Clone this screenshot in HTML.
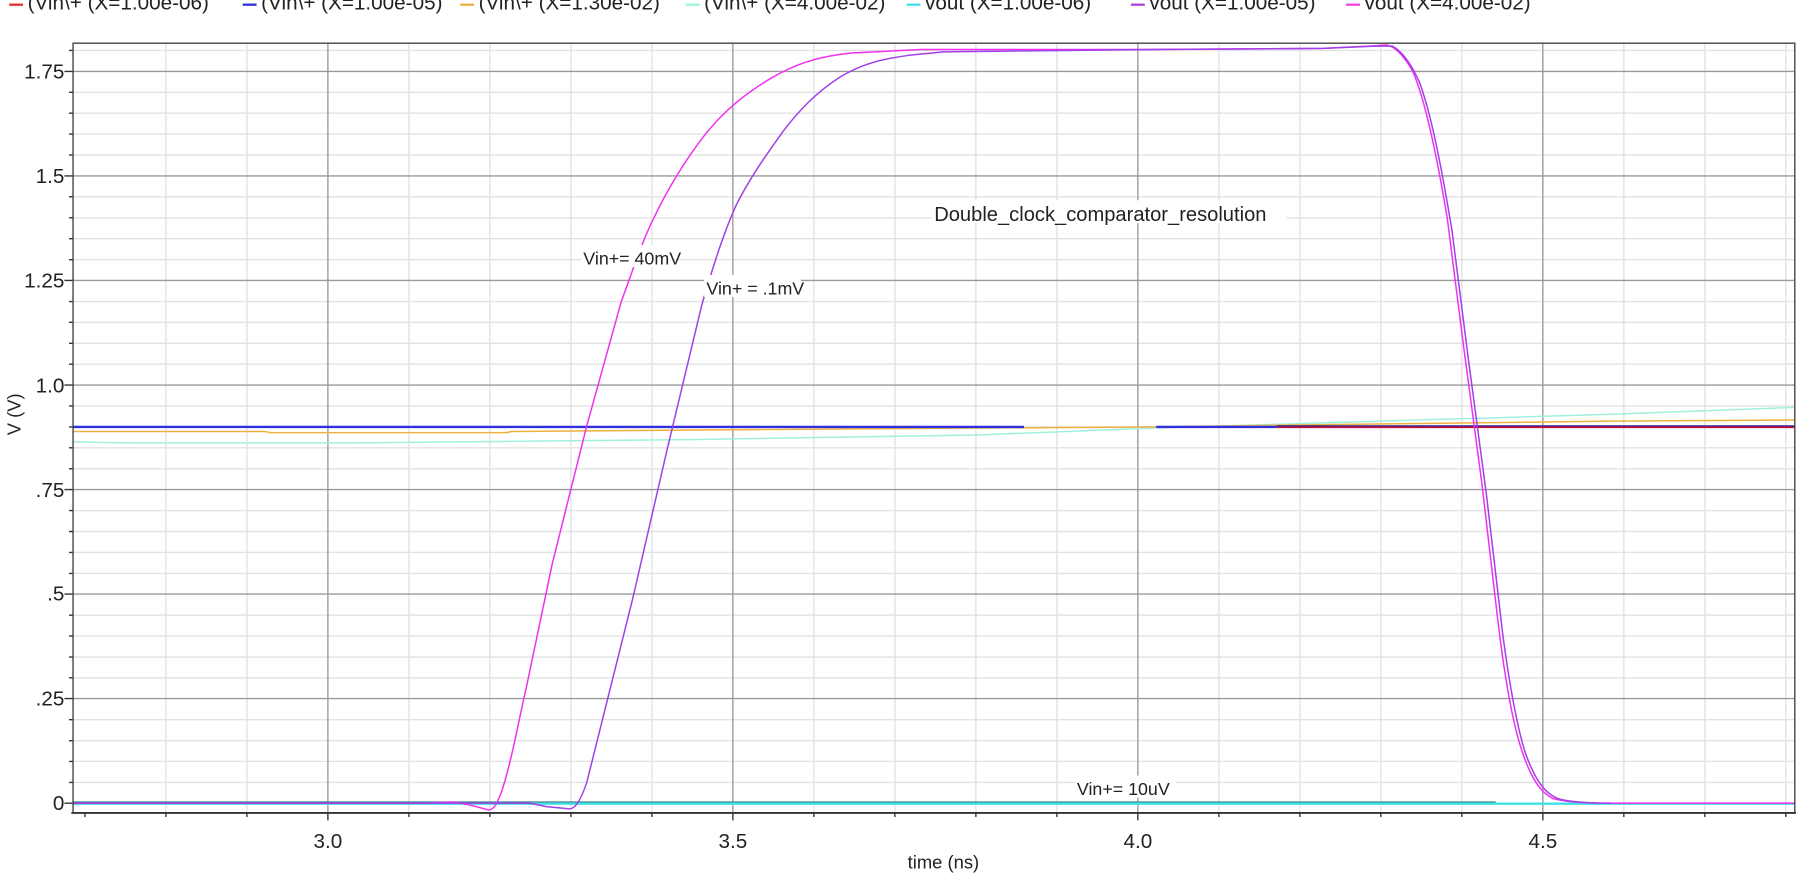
<!DOCTYPE html>
<html><head><meta charset="utf-8"><style>
html,body{margin:0;padding:0;background:#fff;overflow:hidden}
svg{display:block}
text{font-family:"Liberation Sans","DejaVu Sans",sans-serif;fill:#222}
</style></head><body>
<svg width="1804" height="878" viewBox="0 0 1568 763" xmlns="http://www.w3.org/2000/svg">
<rect width="1568" height="763" fill="#fff"/>
<g font-size="18">
<rect x="8" y="3" width="12" height="2" fill="#e03030"/><text x="24" y="8">(Vin\+ (X=1.00e-06)</text>
<rect x="211" y="3" width="12" height="2" fill="#3030e0"/><text x="227" y="8">(Vin\+ (X=1.00e-05)</text>
<rect x="400" y="3" width="12" height="2" fill="#f0b040"/><text x="416" y="8">(Vin\+ (X=1.30e-02)</text>
<rect x="596" y="3" width="12" height="2" fill="#a0f0e0"/><text x="612" y="8">(Vin\+ (X=4.00e-02)</text>
<rect x="788" y="3" width="12" height="2" fill="#40e0e8"/><text x="804" y="8">vout (X=1.00e-06)</text>
<rect x="983" y="3" width="12" height="2" fill="#b040e0"/><text x="999" y="8">vout (X=1.00e-05)</text>
<rect x="1170" y="3" width="12" height="2" fill="#f040e0"/><text x="1186" y="8">vout (X=4.00e-02)</text>
</g>
<g stroke="#e2e2e2" stroke-width="1.2">
<path d="M144.2 37V706M214.6 37V706M355.4 37V706M425.8 37V706M496.2 37V706M566.6 37V706M707.4 37V706M777.8 37V706M848.2 37V706M918.6 37V706M1059.4 37V706M1129.8 37V706M1200.2 37V706M1270.6 37V706M1411.4 37V706M1481.8 37V706M1552.2 37V706"/>
<path d="M63 43.8H1560M63 80.2H1560M63 98.3H1560M63 116.5H1560M63 134.7H1560M63 171H1560M63 189.2H1560M63 207.4H1560M63 225.6H1560M63 262H1560M63 280.1H1560M63 298.3H1560M63 316.5H1560M63 352.8H1560M63 371H1560M63 389.2H1560M63 407.4H1560M63 443.7H1560M63 461.9H1560M63 480.1H1560M63 498.3H1560M63 534.6H1560M63 552.8H1560M63 571H1560M63 589.1H1560M63 625.5H1560M63 643.7H1560M63 661.8H1560M63 680H1560"/>
</g>
<g stroke="#999" stroke-width="1.2">
<path d="M285 37V706M637 37V706M989 37V706M1341 37V706"/>
<path d="M63 62H1560M63 152.9H1560M63 243.7H1560M63 334.6H1560M63 425.4H1560M63 516.3H1560M63 607.1H1560"/>
</g>
<g fill="none" stroke-width="1.3" stroke-linejoin="round">
<path d="M63 384 L120 385 L300 385 L600 382 L850 378 L1000 372 L1200 366 L1400 360 L1560 354" stroke="#a0f0e0"/>
<path d="M63 375 L230 375 L235 376 L440 376 L445 375 L700 373 L1000 371 L1150 369 L1400 366 L1560 365" stroke="#f0b040"/>
<path d="M63 371 L890 371" stroke="#3030e0" stroke-width="2"/>
<path d="M1005 371 L1110 371" stroke="#3030e0" stroke-width="2"/>
<path d="M1110 371 L1560 371" stroke="#c01040" stroke-width="2"/>
<path d="M1110 370 L1560 370" stroke="#202090" stroke-width="1"/>
<path d="M63 698.5 L1560 698.5" stroke="#40e0e8" stroke-width="2"/>
<path d="M63 697 L1300 697" stroke="#408080" stroke-width="1"/>
<path d="M63 698 L370 698 L395 697 L410 700 L425 704 C430 703 432 698 436 688 C445 660 450 630 458 595 L480 490 L510 370 L540 262 C550 235 558 210 568 190 C580 165 595 140 612 118 C630 95 650 80 670 68 C690 56 710 49 740 46 L800 43 L1000 43 L1150 42 L1190 40 L1205 39 C1212 40 1220 48 1228 62 C1238 85 1248 130 1258 190 L1272 300 L1288 420 L1302 540 C1308 590 1314 625 1322 650 C1330 675 1338 688 1350 694 C1360 697 1380 698 1400 698 L1560 698" stroke="#f030f0"/>
<path d="M63 698 L460 698 L475 701 L495 703 C500 703 505 695 510 680 C515 660 520 640 528 608 L550 520 L580 390 L610 265 C620 230 630 200 640 178 C650 158 662 140 680 115 C695 95 710 80 730 67 C745 58 760 52 790 48 L820 45 L1000 43 L1150 42 L1195 40 L1210 40 C1218 44 1226 54 1234 72 C1244 100 1252 140 1262 200 L1276 310 L1292 430 L1306 550 C1312 595 1318 630 1326 655 C1334 677 1342 689 1354 694 C1364 697 1380 698 1400 698" stroke="#a040e8"/>
</g>
<rect x="810" y="174" width="308" height="20" fill="#fff"/>
<text x="812" y="192" font-size="17.5">Double_clock_comparator_resolution</text>
<rect x="505" y="213" width="82" height="19" fill="#fff"/>
<text x="507" y="230" font-size="15.5">Vin+= 40mV</text>
<rect x="612" y="239" width="84" height="19" fill="#fff"/>
<text x="614" y="256" font-size="15.5">Vin+ = .1mV</text>
<rect x="934" y="674" width="88" height="19" fill="#fff"/>
<text x="936" y="691" font-size="15.5">Vin+= 10uV</text>
<path d="M63.5 706 V37.5 H1560 V706" fill="none" stroke="#444" stroke-width="1.2"/>
<path d="M62 706.5 H1561" stroke="#333" stroke-width="1.6"/>
<g stroke="#333" stroke-width="1.2">
<path d="M73.8 706v4M144.2 706v4M214.6 706v4M285 706v7M355.4 706v4M425.8 706v4M496.2 706v4M566.6 706v4M637 706v7M707.4 706v4M777.8 706v4M848.2 706v4M918.6 706v4M989 706v7M1059.4 706v4M1129.8 706v4M1200.2 706v4M1270.6 706v4M1341 706v7M1411.4 706v4M1481.8 706v4M1552.2 706v4"/>
<path d="M63 62h-7M63 152.9h-7M63 243.7h-7M63 334.6h-7M63 425.4h-7M63 516.3h-7M63 607.1h-7M63 698h-7"/>
<path d="M63 43.8h-3M63 80.2h-3M63 98.3h-3M63 116.5h-3M63 134.7h-3M63 171h-3M63 189.2h-3M63 207.4h-3M63 225.6h-3M63 262h-3M63 280.1h-3M63 298.3h-3M63 316.5h-3M63 352.8h-3M63 371h-3M63 389.2h-3M63 407.4h-3M63 443.7h-3M63 461.9h-3M63 480.1h-3M63 498.3h-3M63 534.6h-3M63 552.8h-3M63 571h-3M63 589.1h-3M63 625.5h-3M63 643.7h-3M63 661.8h-3M63 680h-3"/>
</g>
<g font-size="18" text-anchor="end">
<text x="56" y="68">1.75</text>
<text x="56" y="159">1.5</text>
<text x="56" y="250">1.25</text>
<text x="56" y="341">1.0</text>
<text x="56" y="432">.75</text>
<text x="56" y="522">.5</text>
<text x="56" y="613">.25</text>
<text x="56" y="704">0</text>
</g>
<g font-size="18" text-anchor="middle">
<text x="285" y="737">3.0</text>
<text x="637" y="737">3.5</text>
<text x="989" y="737">4.0</text>
<text x="1341" y="737">4.5</text>
<text x="820" y="755" font-size="16">time (ns)</text>
</g>
<text transform="translate(18,360) rotate(-90)" font-size="16" text-anchor="middle">V (V)</text>
</svg>
</body></html>
